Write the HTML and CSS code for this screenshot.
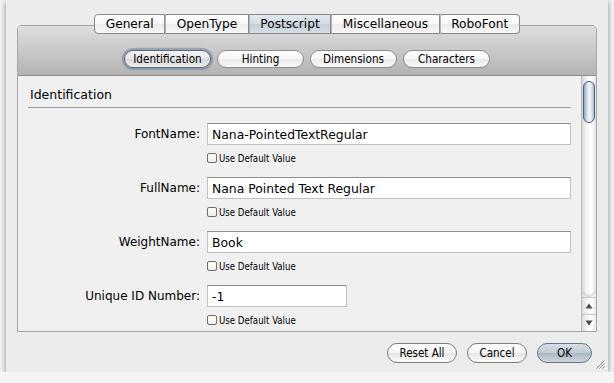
FILE: index.html
```html
<!DOCTYPE html>
<html>

<head>
    <meta charset="UTF-8">
    <title>Font Info - Postscript</title>
    <link rel="stylesheet" href="styles.css">
</head>

<body>
<div class="window">

    <!-- top tabs -->
    <div class="tabs">
        <span class="tab">General</span>
        <span class="tab">OpenType</span>
        <span class="tab selected">Postscript</span>
        <span class="tab">Miscellaneous</span>
        <span class="tab">RoboFont</span>
    </div>

    <div class="panel">
        <div class="panel-head">
            <span class="pill selected">Identification</span>
            <span class="pill">Hinting</span>
            <span class="pill">Dimensions</span>
            <span class="pill">Characters</span>
        </div>

        <div class="content">
            <div class="form">
                <div class="section-title">Identification</div>

                <div class="row">
                    <label class="label">FontName:</label>
                    <input class="field" type="text" value="Nana-PointedTextRegular">
                    <span></span>
                    <span class="check"><span class="box"></span>Use Default Value</span>
                </div>

                <div class="row">
                    <label class="label">FullName:</label>
                    <input class="field" type="text" value="Nana Pointed Text Regular">
                    <span></span>
                    <span class="check"><span class="box"></span>Use Default Value</span>
                </div>

                <div class="row">
                    <label class="label">WeightName:</label>
                    <input class="field" type="text" value="Book">
                    <span></span>
                    <span class="check"><span class="box"></span>Use Default Value</span>
                </div>

                <div class="row">
                    <label class="label">Unique ID Number:</label>
                    <input class="field short" type="text" value="-1">
                    <span></span>
                    <span class="check"><span class="box"></span>Use Default Value</span>
                </div>
            </div>

            <!-- scroller -->
            <div class="scrollbar">
                <div class="track">
                    <div class="thumb"></div>
                </div>
                <div class="arrow">
                    <svg width="8" height="6" viewBox="0 0 8 6"><path d="M4 0.5 L7.5 5.5 L0.5 5.5 Z" fill="#4a4a4a"/></svg>
                </div>
                <div class="arrow">
                    <svg width="8" height="6" viewBox="0 0 8 6"><path d="M0.5 0.5 L7.5 0.5 L4 5.5 Z" fill="#4a4a4a"/></svg>
                </div>
            </div>
        </div>
    </div>

    <div class="buttons">
        <button class="btn reset">Reset All</button>
        <button class="btn cancel">Cancel</button>
        <button class="btn ok">OK</button>
    </div>

    <svg class="grip" width="10" height="10" viewBox="0 0 10 10">
        <path d="M9.5 1.5 L1.5 9.5 M9.5 4.5 L4.5 9.5 M9.5 7.5 L7.5 9.5" stroke="#8e8e8e" stroke-width="1"/>
    </svg>
</div>
</body>

</html>
```

FILE: styles.css
```css
body {
    margin: 0;
    background: #f4f4f4;
    font-family: "DejaVu Sans", sans-serif;
    color: #000;
}

.window {
    position: relative;
    box-sizing: border-box;
    width: 602px;
    height: 372px;
    margin-left: 6px;
    padding: 14px 11px 0 11px;
    background: #ececec;
    box-shadow: 0 2px 6px rgba(0, 0, 0, 0.45);
}

/* top tabs */
.tabs {
    position: relative;
    z-index: 1;
    display: flex;
    justify-content: center;
    height: 20px;
}

.tab {
    display: flex;
    align-items: center;
    padding: 0 10.5px;
    font-size: 12.2px;
    border: 1px solid #8a8a8a;
    border-left: 1px solid #b4b4b4;
    background: linear-gradient(#ffffff, #f7f7f7 50%, #ececec 52%, #f6f6f6);
}

.tab:first-child {
    border-left: 1px solid #8a8a8a;
    border-radius: 4px 0 0 4px;
}

.tab:last-child {
    border-radius: 0 4px 4px 0;
}

.tab.selected {
    background: linear-gradient(#e2e8ef, #d3dbe4 50%, #c5cfda 52%, #d5dde6);
}

.panel {
    box-sizing: border-box;
    height: 307px;
    margin-top: -9px;
    border: 1px solid #a6a6a6;
    border-radius: 5px 5px 0 0;
    overflow: hidden;
}

.panel-head {
    box-sizing: border-box;
    height: 50px;
    padding-top: 24px;
    display: flex;
    justify-content: center;
    align-items: flex-start;
    gap: 6px;
    background: linear-gradient(#dedede, #b3b3b3);
    border-bottom: 1px solid #8d8d8d;
}

.pill {
    box-sizing: border-box;
    width: 87px;
    height: 18px;
    display: flex;
    align-items: center;
    justify-content: center;
    font-family: "DejaVu Sans Condensed", "DejaVu Sans", sans-serif;
    font-stretch: condensed;
    font-size: 11.6px;
    border: 1px solid #8c8c8c;
    border-radius: 9px;
    background: linear-gradient(#ffffff, #f6f6f6 50%, #eaeaea 52%, #f8f8f8);
}

.pill.selected {
    border-color: #5d6b7b;
    background: linear-gradient(#f4f4f4, #e6e6e6 50%, #d9d9d9 52%, #ececec);
    box-shadow: 0 0 1px 2px rgba(105, 125, 150, 0.55);
}

.content {
    display: flex;
    height: 255px;
    background: #f0f0f0;
}

.form {
    flex: 1;
    padding: 0 10px;
    overflow: hidden;
}

.section-title {
    font-size: 12.5px;
    line-height: 16px;
    padding: 11px 0 4px 2px;
    border-bottom: 1px solid #9b9b9b;
    margin-bottom: 15px;
}

.row {
    display: grid;
    grid-template-columns: 172px 1fr;
    column-gap: 7px;
    margin-bottom: 13px;
}

.label {
    font-size: 12px;
    line-height: 22px;
    text-align: right;
}

.field {
    box-sizing: border-box;
    height: 22px;
    margin: 0;
    padding: 0 4px;
    font-family: "DejaVu Sans", sans-serif;
    font-size: 12.4px;
    color: #000;
    background: #fff;
    border: 1px solid #c2c2c2;
    border-top-color: #8f8f8f;
    outline: none;
}

.field.short {
    width: 140px;
}

.check {
    display: flex;
    align-items: center;
    height: 12px;
    margin-top: 7px;
    font-family: "DejaVu Sans Condensed", "DejaVu Sans", sans-serif;
    font-stretch: condensed;
    font-size: 9.6px;
}

.box {
    box-sizing: border-box;
    width: 10px;
    height: 10px;
    margin-right: 2px;
    border: 1px solid #6f6f6f;
    border-radius: 2px;
    background: linear-gradient(#ffffff, #ececec);
}

/* scroller */
.scrollbar {
    width: 14px;
    display: flex;
    flex-direction: column;
    border-left: 1px solid #bcbcbc;
    background: linear-gradient(to right, #d9d9d9, #f2f2f2 30%, #ffffff 65%, #e9e9e9);
}

.track {
    flex: 1;
    padding-top: 5px;
    border-radius: 0 0 7px 7px;
    box-shadow: inset 0 -3px 3px -1px rgba(0, 0, 0, 0.14);
}

.thumb {
    box-sizing: border-box;
    height: 42px;
    margin: 0 1px;
    border: 1px solid #4c627d;
    border-radius: 6px;
    background: linear-gradient(to right, #92a6bd, #dce5ef 35%, #f4f7fa 60%, #aebdcf);
}

.arrow {
    height: 16px;
    display: flex;
    align-items: center;
    justify-content: center;
    border-top: 1px solid #c4c4c4;
}

.buttons {
    display: flex;
    justify-content: flex-end;
    gap: 10px;
    margin-top: 11px;
    padding-right: 5px;
}

.btn {
    box-sizing: border-box;
    height: 20px;
    padding: 0;
    font-family: "DejaVu Sans Condensed", "DejaVu Sans", sans-serif;
    font-stretch: condensed;
    font-size: 11.5px;
    color: #000;
    border: 1px solid #7c7c7c;
    border-radius: 10px;
    background: linear-gradient(#ffffff, #f5f5f5 50%, #e6e6e6 52%, #fbfbfb);
}

.reset {
    width: 70px;
}

.cancel {
    width: 60px;
}

.ok {
    width: 55px;
    border-color: #6a7584;
    background: linear-gradient(#d8dee6, #c0c9d3 50%, #acb8c5 52%, #ccd4dd);
}

.grip {
    position: absolute;
    right: 3px;
    bottom: 3px;
}
```
